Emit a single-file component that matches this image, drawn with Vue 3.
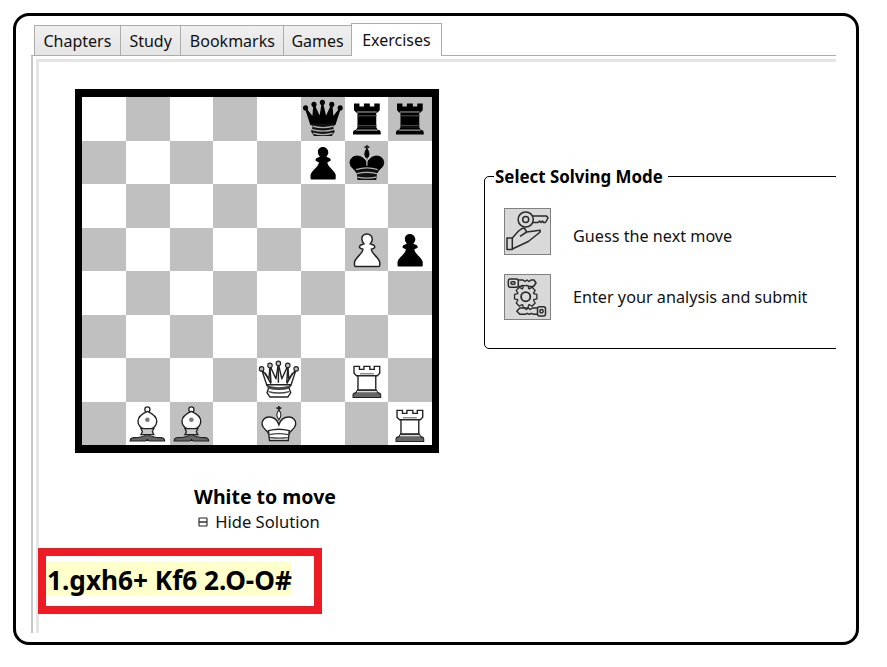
<script setup>
const tabs = ['Chapters', 'Study', 'Bookmarks', 'Games', 'Exercises']
const position = [
  '.....qrr',
  '.....pk.',
  '........',
  '......Pp',
  '........',
  '........',
  '....Q.R.',
  '.BB.K..R'
]
const names = { q: 'bq', r: 'br', p: 'bp', k: 'bk', Q: 'wq', R: 'wr', P: 'wp', K: 'wk', B: 'wb' }
const squares = position.flatMap((row, r) =>
  row.split('').map((ch, c) => ({
    id: r + '-' + c,
    dark: (r + c) % 2 === 1,
    piece: names[ch] || null
  }))
)

// Outline of the eight-toothed cog in the "enter analysis" icon
const gearPath = (() => {
  const cx = 21.7
  const cy = 22.7
  const pts = []
  for (let i = 0; i < 8; i++) {
    const a = (i * Math.PI) / 4
    for (const [r, d] of [[8.6, -0.36], [11.4, -0.2], [11.4, 0.2], [8.6, 0.36]]) {
      pts.push((cx + r * Math.cos(a + d)).toFixed(2) + ' ' + (cy + r * Math.sin(a + d)).toFixed(2))
    }
  }
  return 'M' + pts.join('L') + 'z'
})()
</script>

<template>
  <div class="frame">
    <svg class="defs" aria-hidden="true">
      <defs>
        <path id="rook-crown" d="M9 6.500h5.500v3h4.500v-3h6v3h4.500v-3H35v7l-2.500 2.500h-21L9 13.500z" />
        <path id="rook-foot" d="M8 38v-2.500q0-2 3-2.500l1.500-2.500h19L33 33q3 .5 3 2.500V38z" />
        <path id="queen-crown" d="M10 28 4.500 11.500 12 21l1-13 6 13 2.500-15 3.500 15 6-13 1 13 7.500-9.500L34 28z" />
        <path id="queen-base" d="M10.500 27h23l-1 4 1.500 4-3 4.500H13l-3-4.500 1.500-4z" />
        <path id="king-heart" d="M22 23C18 12 4.500 13.500 5 22.500c.3 5 5.500 6 6.500 9.500h21c1-3.500 6.200-4.500 6.500-9.500C39.500 13.500 26 12 22 23z" />
        <path id="pawn" d="M22 6c3.300 0 5.500 2.700 5.500 5.500 0 2-1 3.500-2 4.500 2.500.8 4.500 1.800 4.500 3.200 0 1-1.800 1.800-3.500 2.300.5 5 7.500 8 8.500 13v3.500q0 1-1 1H10.500q-1 0-1-1V34.500c1-5 8-8 8.500-13-1.700-.5-3.500-1.300-3.500-2.300 0-1.400 2-2.400 4.500-3.200-1-1-2-2.500-2-4.500C16.500 8.700 18.700 6 22 6z" />

        <symbol id="br" viewBox="0 0 44 44">
          <use href="#rook-crown" fill="#000" />
          <rect x="12.500" y="16" width="19" height="15" fill="#000" />
          <path d="M12 15h20" stroke="#777" stroke-width="1.400" />
          <path d="M12 19h20M12 29h20" stroke="#555" stroke-width="1" />
          <use href="#rook-foot" fill="#000" />
          <path d="M11 33.500h22" stroke="#999" stroke-width="1.300" />
        </symbol>

        <symbol id="wr" viewBox="0 0 44 44">
          <g transform="translate(0 2)">
            <use href="#rook-crown" fill="#fff" stroke="#222" stroke-width="1.400" />
            <rect x="13" y="16" width="18" height="14.500" fill="#fff" stroke="#222" stroke-width="1.400" />
            <path d="M15 14h14" stroke="#555" stroke-width="1" />
            <use href="#rook-foot" fill="#666" stroke="#222" stroke-width="1.100" />
            <path d="M12 32h20" stroke="#ddd" stroke-width="1.100" />
          </g>
        </symbol>

        <symbol id="bq" viewBox="0 0 44 44">
          <use href="#queen-crown" fill="#000" stroke="#000" stroke-width="1.400" stroke-linejoin="round" />
          <g fill="#000">
            <circle cx="4.500" cy="11" r="2.600" /><circle cx="13" cy="7.500" r="2.600" />
            <circle cx="21.500" cy="5.500" r="2.600" /><circle cx="31" cy="7.500" r="2.600" />
            <circle cx="39.500" cy="11" r="2.600" />
          </g>
          <use href="#queen-base" fill="#111" />
          <path d="M11.500 29.500q10.500 3 21 0M11 33q11 3 22 0M12 36.500q10 3 20 0" fill="none" stroke="#b0b0b0" stroke-width="1.200" />
        </symbol>

        <symbol id="wq" viewBox="0 0 44 44">
          <use href="#queen-crown" fill="#fff" stroke="#222" stroke-width="1.400" stroke-linejoin="round" />
          <path d="M13 10l1 15M21.500 8v17M31 10l-1 15M8 15l6 11M36 15l-6 11" stroke="#222" stroke-width="1.500" />
          <g fill="#bbb" stroke="#222" stroke-width="1.100">
            <circle cx="4.500" cy="11" r="2.300" /><circle cx="13" cy="7.500" r="2.300" />
            <circle cx="21.500" cy="5.500" r="2.300" /><circle cx="31" cy="7.500" r="2.300" />
            <circle cx="39.500" cy="11" r="2.300" />
          </g>
          <use href="#queen-base" fill="#fff" stroke="#222" stroke-width="1.400" />
          <path d="M11 29.500q11 3 22 0" fill="none" stroke="#444" stroke-width="2.800" />
          <path d="M11.500 34q10.500 3 21 0" fill="none" stroke="#444" stroke-width="1.500" />
        </symbol>

        <symbol id="bk" viewBox="0 0 44 44">
          <path d="M22 4v5M19.500 6.200h5" stroke="#222" stroke-width="1.600" />
          <path d="M22 8q-4 5 0 10q4-5 0-10z" fill="#000" stroke="#000" stroke-width="1.200" />
          <use href="#king-heart" fill="#000" stroke="#000" stroke-width="1" />
          <path d="M22 17v8" stroke="#aaa" stroke-width="1.400" />
          <path d="M11.500 30q10.500-3 21 0l-1 9.500h-19z" fill="#111" />
          <path d="M11 29q11-3.500 22 0M12 33q10-2.500 20 0M12.500 36.500q9.500 2 19 0" fill="none" stroke="#b0b0b0" stroke-width="1.200" />
        </symbol>

        <symbol id="wk" viewBox="0 0 44 44">
          <path d="M22 4v5M19.500 6.200h5" stroke="#222" stroke-width="1.600" />
          <path d="M22 8q-4 5 0 10q4-5 0-10z" fill="#fff" stroke="#222" stroke-width="1.100" />
          <use href="#king-heart" fill="#fff" stroke="#222" stroke-width="1.500" />
          <path d="M11.500 29q10.500-3 21 0l-1 10h-19z" fill="#fff" stroke="#222" stroke-width="1.400" />
          <path d="M12.500 33q9.500-2 19 0M13 36q9 1 18 0" fill="none" stroke="#444" stroke-width="1.300" />
        </symbol>

        <symbol id="wb" viewBox="0 0 44 44">
          <circle cx="21.500" cy="7.500" r="2.600" fill="#fff" stroke="#222" stroke-width="1.300" />
          <path d="M21.500 9.500C26 11.500 31 15 31 19.500c0 4-3 7-5.500 7.500h-8C15 26.500 12 23.500 12 19.500c0-4.500 5-8 9.500-10z" fill="#fff" stroke="#222" stroke-width="1.400" />
          <circle cx="21.500" cy="18" r="2.300" fill="#777" />
          <path d="M15 27h13l-1.500 3 1.500 3H15l1.500-3z" fill="#ccc" stroke="#222" stroke-width="1.300" />
          <path d="M20.500 33q-3 3-13 3q-3.500.5-3.500 3.500h15q2.500 0 2.500-2q0 2 2.500 2h15q0-3-3.500-3.500q-10 0-13-3z" fill="#666" stroke="#222" stroke-width="1.100" />
        </symbol>

        <symbol id="bp" viewBox="0 0 44 44"><use href="#pawn" fill="#000" /></symbol>
        <symbol id="wp" viewBox="0 0 44 44"><use href="#pawn" fill="#fff" stroke="#222" stroke-width="1.500" /></symbol>
      </defs>
    </svg>

    <nav class="tabs">
      <span v-for="t in tabs" :key="t" class="tab" :class="{ active: t === 'Exercises' }">{{ t }}</span>
    </nav>

    <div class="pane">
      <div class="content">
        <div class="layout">
          <div class="left">
            <div class="board">
              <div v-for="s in squares" :key="s.id" class="square" :class="{ dark: s.dark }">
                <svg v-if="s.piece" class="piece" viewBox="0 0 44 44"><use :href="'#' + s.piece" /></svg>
              </div>
            </div>
            <div class="to-move">White to move</div>
            <div class="hide">
              <svg class="minus" viewBox="0 0 10 10" width="10" height="10">
                <rect x="1" y="1" width="8" height="8" rx="0.500" fill="none" stroke="#222" stroke-width="1.100" />
                <path d="M1 5h8" stroke="#222" stroke-width="1.400" />
              </svg>
              <span>Hide Solution</span>
            </div>
          </div>

          <fieldset class="mode">
            <legend>Select Solving Mode</legend>
            <div class="option">
              <span class="icon">
                <svg viewBox="1 1 45 45" width="45" height="45" fill="none" stroke="#2a2a2a" stroke-width="1.500" stroke-linejoin="round">
                  <circle cx="21.700" cy="11.500" r="7.600" />
                  <circle cx="21.700" cy="11.500" r="3" />
                  <path d="M29 8h13.500l1.500 2-2.500 4.500h-2l-1-1.500-1.500 1.500-1.500-1.500-1.500 1.500H29" />
                  <rect x="3" y="30" width="5.300" height="11.500" />
                  <path d="M8.300 30l6-6.700Q18 20 20.300 20l2.400 4L36 22.300q1 1.200-1 2.700L24.300 33.500 8.300 41" />
                  <path d="M22.700 24 16 28.300" />
                </svg>
              </span>
              <span class="label first">Guess the next move</span>
            </div>
            <div class="option second">
              <span class="icon">
                <svg viewBox="1 1 45 45" width="45" height="45" fill="none" stroke="#2a2a2a" stroke-width="1.500" stroke-linejoin="round">
                  <rect x="4.300" y="5" width="10" height="8.300" rx="2" />
                  <rect x="7" y="7.700" width="4" height="2.600" rx="1" />
                  <path d="M14.300 6h4.700l2 1.500L23 6l2 1.500L27 6h3l2 3-2.500 3.500h-5l-2-1-2 1-2-1-2 1h-2" />
                  <path :d="gearPath" fill="#d9d9d9" stroke-width="1.300" />
                  <circle cx="21.700" cy="22.700" r="4.600" stroke-width="1.800" />
                  <path d="M34.300 34h-6l-2 1.500-2-1.500-2 1.500-2-1.500h-4.500l-3 3.300 3 3h5.500l2-1 2 1 2-1 2 1h5" fill="#d9d9d9" />
                  <rect x="33.500" y="32.700" width="8" height="9.300" rx="2" fill="#d9d9d9" />
                  <circle cx="37.500" cy="37.300" r="1.700" />
                </svg>
              </span>
              <span class="label">Enter your analysis and submit</span>
            </div>
          </fieldset>
        </div>

        <div class="solution"><mark>1.gxh6+ Kf6 2.O-O#</mark></div>
      </div>
    </div>
  </div>
</template>

<style scoped>
.frame {
  box-sizing: border-box;
  width: 846px;
  height: 632px;
  margin: 13px 0 0 13px;
  padding: 7px 20px 9px 15px;
  border: 3px solid #000;
  border-radius: 16px;
  display: flex;
  flex-direction: column;
  background: #fff;
  font-family: "Noto Sans", "Open Sans", sans-serif;
  color: #111;
}
.defs {
  display: block;
  width: 0;
  height: 0;
  overflow: hidden;
}
.tabs {
  display: flex;
  align-items: flex-end;
  padding-left: 3px;
  height: 33px;
  flex: none;
  position: relative;
  z-index: 1;
  margin-bottom: -1px;
}
.tab {
  box-sizing: border-box;
  height: 30px;
  margin-bottom: 1px;
  margin-right: -1px;
  padding: 0 8.500px;
  border: 1px solid #acacac;
  border-bottom: 0;
  background: linear-gradient(#f0f0f0, #e5e5e5);
  font-size: 16px;
  line-height: 31px;
  white-space: nowrap;
}
.tab:nth-child(4) {
  padding: 0 7px;
}
.tab.active {
  height: 33px;
  margin-bottom: 0;
  padding: 0 10.500px;
  background: #fff;
  line-height: 33px;
}
.pane {
  flex: 1;
  min-height: 0;
  overflow: hidden;
  display: flex;
  border-top: 1px solid #acacac;
  border-left: 2px solid #c8c8c8;
  padding: 3px 0 0 3px;
}
.content {
  flex: 1;
  min-width: 0;
  border-top: 3px solid #e5e5e5;
  border-left: 3px solid #e5e5e5;
  padding-top: 27px;
}
.layout {
  display: flex;
  align-items: flex-start;
  padding-left: 36px;
}
.left {
  width: 364px;
  flex: none;
}
.board {
  box-sizing: border-box;
  width: 364px;
  height: 364px;
  border: solid #000;
  border-width: 8px 7px;
  display: grid;
  grid-template-columns: repeat(8, 43.750px);
  grid-template-rows: repeat(8, 43.500px);
  background: #fff;
}
.square {
  background: #fff;
}
.square.dark {
  background: #c0c0c0;
}
.piece {
  display: block;
  width: 100%;
  height: 100%;
  filter: blur(0.3px);
}
.to-move {
  margin-top: 31px;
  padding-left: 16px;
  text-align: center;
  font-size: 19.500px;
  font-weight: 700;
  line-height: 26px;
  color: #000;
}
.hide {
  display: flex;
  justify-content: center;
  align-items: center;
  gap: 7px;
  padding-left: 4px;
  font-size: 16.600px;
  line-height: 23px;
}
.minus {
  flex: none;
}
.mode {
  flex: none;
  box-sizing: border-box;
  width: 440px;
  height: 184px;
  margin: 76px 0 0 45px;
  padding: 21px 0 0 19px;
  border: 1px solid #000;
  border-radius: 5px;
}
.mode legend {
  margin-left: -10px;
  padding: 2px 5px 0 1px;
  font-size: 16.900px;
  font-weight: 700;
  line-height: 20px;
  color: #000;
}
.option {
  display: flex;
  align-items: center;
  gap: 22px;
}
.option.second {
  margin-top: 19px;
}
.icon {
  box-sizing: border-box;
  width: 47px;
  height: 47px;
  border: 1px solid #808080;
  background: #d9d9d9;
  display: flex;
  align-items: center;
  justify-content: center;
  flex: none;
}
.second .icon {
  height: 46px;
}
.label {
  font-size: 16.200px;
}
.label.first {
  margin-top: 9px;
}
.solution {
  box-sizing: border-box;
  width: 284px;
  height: 66px;
  margin: 15px 0 0 -1px;
  border: 8px solid #ed1c24;
  padding-top: 5px;
  font-size: 26.200px;
  font-weight: 700;
  color: #000;
}
.solution mark {
  display: block;
  width: fit-content;
  height: 34px;
  line-height: 38px;
  background: #ffffcc;
  color: #000;
  padding-left: 1px;
}
</style>
